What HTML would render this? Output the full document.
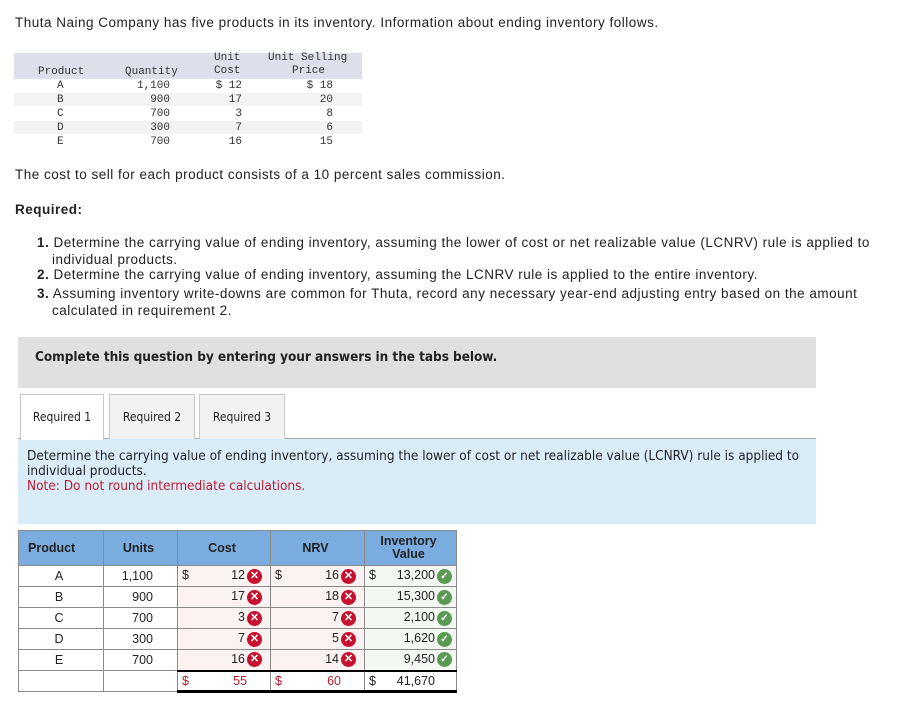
<!DOCTYPE html>
<html><head><meta charset="utf-8"><style>
*{margin:0;padding:0;box-sizing:border-box}
body{width:907px;height:703px;background:#fff;position:relative;font-family:"Liberation Sans",sans-serif;color:#222;overflow:hidden}
.a{position:absolute;white-space:nowrap}
.t{font-size:13.5px;letter-spacing:0.5px}
.m{font-family:"Liberation Mono",monospace;font-size:11px;color:#333}
.tab{position:absolute;top:394px;height:45px;border:1px solid #c8c8c8;border-bottom:none;background:#f2f2f2;font-family:"DejaVu Sans Condensed","Liberation Sans",sans-serif;font-size:12px;text-align:center;line-height:44px}
table.b{position:absolute;left:18px;top:530px;border-collapse:collapse;font-size:12.5px}
table.b td{border:1px solid #8a8a8a;height:21px;padding:0 8px 0 4px}
table.b tr.h td{background:#7aace0;height:35px;font-weight:bold;text-align:center;color:#222}
.x{display:inline-block;width:15px;height:15px;border-radius:50%;background:#c8102e;color:#fff;font-size:11px;line-height:15px;text-align:center;font-weight:bold;vertical-align:middle;margin-left:2px}
.c{display:inline-block;width:15px;height:15px;border-radius:50%;background:#5b9a52;color:#fff;font-size:10px;line-height:15px;text-align:center;font-weight:bold;vertical-align:middle;margin-left:2px}
.pk{background:#fdf2f2}
.gn{background:#f4f8f3}
.r{text-align:right}
.red{color:#b81c2e}
</style></head><body>
<div class="a t" style="left:15px;top:15px">Thuta Naing Company has five products in its inventory. Information about ending inventory follows.</div>

<div class="a" style="left:14px;top:53px;width:348px;height:26px;background:#dde0ea"></div>
<div class="a" style="left:14px;top:93px;width:348px;height:13px;background:#f3f3f3"></div>
<div class="a" style="left:14px;top:121px;width:348px;height:13px;background:#f3f3f3"></div>
<div class="a m" style="left:38px;top:66px">Product</div>
<div class="a m" style="left:125px;top:66px">Quantity</div>
<div class="a m" style="left:214px;top:52px">Unit</div>
<div class="a m" style="left:214px;top:65px">Cost</div>
<div class="a m" style="left:268px;top:52px">Unit Selling</div>
<div class="a m" style="left:292px;top:65px">Price</div>
<div class="a m" style="left:57px;top:79px;line-height:14px">A<br>B<br>C<br>D<br>E</div>
<div class="a m r" style="left:120px;top:79px;width:50px;line-height:14px">1,100<br>900<br>700<br>300<br>700</div>
<div class="a m r" style="left:200px;top:79px;width:42px;line-height:14px">$ 12<br>17<br>3<br>7<br>16</div>
<div class="a m r" style="left:290px;top:79px;width:43px;line-height:14px">$ 18<br>20<br>8<br>6<br>15</div>

<div class="a t" style="left:15px;top:167px">The cost to sell for each product consists of a 10 percent sales commission.</div>
<div class="a t" style="left:15px;top:202px;font-weight:bold">Required:</div>
<div class="a t" style="left:37px;top:234px;line-height:17px"><b>1.</b> Determine the carrying value of ending inventory, assuming the lower of cost or net realizable value (LCNRV) rule is applied to<br><span style="padding-left:15px">individual products.</span></div>
<div class="a t" style="left:37px;top:267px"><b>2.</b> Determine the carrying value of ending inventory, assuming the LCNRV rule is applied to the entire inventory.</div>
<div class="a t" style="left:37px;top:285px;line-height:17px"><b>3.</b> Assuming inventory write-downs are common for Thuta, record any necessary year-end adjusting entry based on the amount<br><span style="padding-left:15px">calculated in requirement 2.</span></div>

<div class="a" style="left:18px;top:337px;width:798px;height:51px;background:#e0e0e0"></div>
<div class="a" style="left:35px;top:349px;font-weight:bold;font-size:13.5px;font-family:'DejaVu Sans Condensed','Liberation Sans',sans-serif;letter-spacing:-0.05px">Complete this question by entering your answers in the tabs below.</div>

<div class="a" style="left:18px;top:438px;width:798px;height:86px;background:#dbecf9;border-top:1px solid #aaa"></div>
<div class="tab" style="left:20px;width:84px;background:#fff;height:46px">Required 1</div>
<div class="tab" style="left:109px;width:86px">Required 2</div>
<div class="tab" style="left:199px;width:86px">Required 3</div>
<div class="a" style="left:27px;top:449px;font-size:13.5px;line-height:15px;font-family:'DejaVu Sans Condensed','Liberation Sans',sans-serif">Determine the carrying value of ending inventory, assuming the lower of cost or net realizable value (LCNRV) rule is applied to<br>individual products.<br><span class="red">Note: Do not round intermediate calculations.</span></div>

<table class="b">
<tr class="h"><td style="width:85px;text-align:left;padding-left:9px">Product</td><td style="width:74px">Units</td><td style="width:93px">Cost</td><td style="width:94px">NRV</td><td style="width:92px;line-height:13px">Inventory<br>Value</td></tr>
<tr><td style="text-align:center">A</td><td class="r" style="padding-right:24px">1,100</td><td class="pk">$<span style="float:right">12<span class="x">✕</span></span></td><td class="pk">$<span style="float:right">16<span class="x">✕</span></span></td><td class="gn" style="padding-right:4px">$<span style="float:right">13,200<span class="c">✓</span></span></td></tr>
<tr><td style="text-align:center">B</td><td class="r" style="padding-right:24px">900</td><td class="pk r">17<span class="x">✕</span></td><td class="pk r">18<span class="x">✕</span></td><td class="gn r" style="padding-right:4px">15,300<span class="c">✓</span></td></tr>
<tr><td style="text-align:center">C</td><td class="r" style="padding-right:24px">700</td><td class="pk r">3<span class="x">✕</span></td><td class="pk r">7<span class="x">✕</span></td><td class="gn r" style="padding-right:4px">2,100<span class="c">✓</span></td></tr>
<tr><td style="text-align:center">D</td><td class="r" style="padding-right:24px">300</td><td class="pk r">7<span class="x">✕</span></td><td class="pk r">5<span class="x">✕</span></td><td class="gn r" style="padding-right:4px">1,620<span class="c">✓</span></td></tr>
<tr><td style="text-align:center">E</td><td class="r" style="padding-right:24px">700</td><td class="pk r">16<span class="x">✕</span></td><td class="pk r">14<span class="x">✕</span></td><td class="gn r" style="padding-right:4px">9,450<span class="c">✓</span></td></tr>
<tr><td></td><td></td><td class="red" style="border-top:2px solid #000;border-bottom:3px solid #000">$<span style="float:right;padding-right:15px">55</span></td><td class="red" style="border-top:2px solid #000;border-bottom:3px solid #000">$<span style="float:right;padding-right:15px">60</span></td><td style="border-top:2px solid #000;border-bottom:3px solid #000;padding-right:4px">$<span style="float:right;padding-right:17px">41,670</span></td></tr>
</table>
</body></html>
